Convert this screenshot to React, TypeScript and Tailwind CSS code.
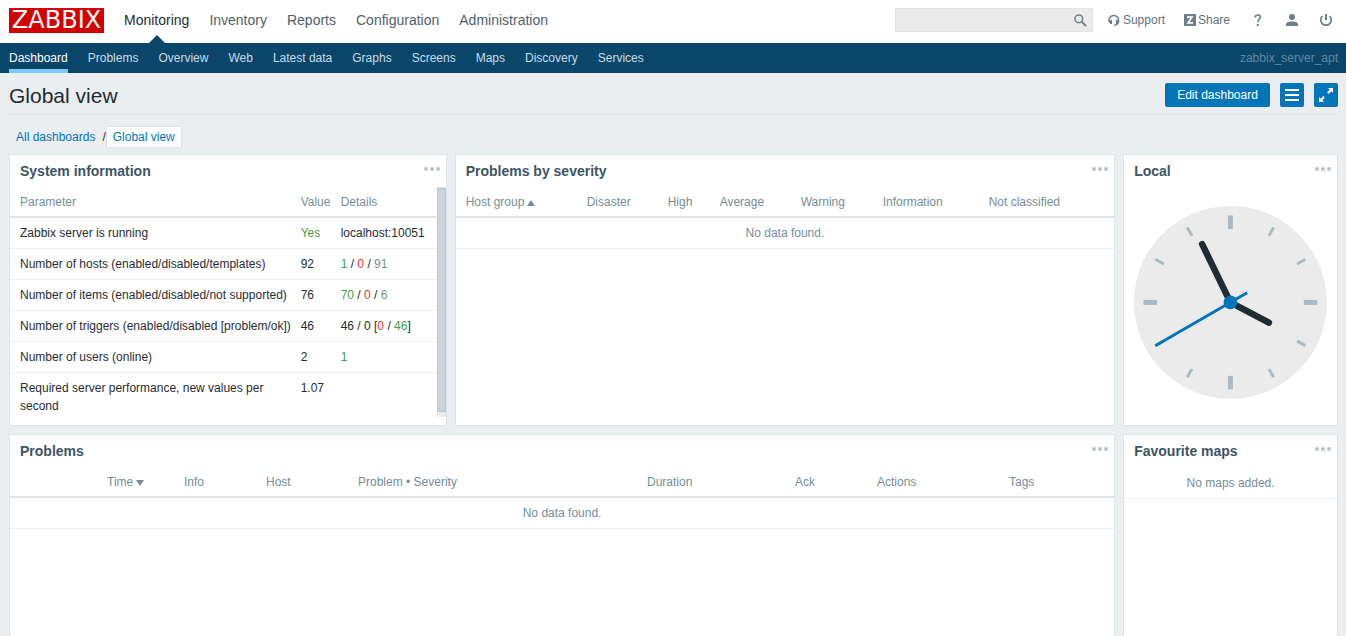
import type { ReactNode } from "react"

const mainMenu = ["Monitoring", "Inventory", "Reports", "Configuration", "Administration"]

const subMenu = [
  "Dashboard",
  "Problems",
  "Overview",
  "Web",
  "Latest data",
  "Graphs",
  "Screens",
  "Maps",
  "Discovery",
  "Services",
]

const green = "text-[#429e47]"
const red = "text-[#e33734]"
const grey = "text-[#768d99]"

interface InfoRow {
  name: string
  value: ReactNode
  details?: ReactNode
}

const infoRows: InfoRow[] = [
  {
    name: "Zabbix server is running",
    value: <span className={green}>Yes</span>,
    details: "localhost:10051",
  },
  {
    name: "Number of hosts (enabled/disabled/templates)",
    value: "92",
    details: (
      <>
        <span className={green}>1</span> / <span className={red}>0</span> / <span className={grey}>91</span>
      </>
    ),
  },
  {
    name: "Number of items (enabled/disabled/not supported)",
    value: "76",
    details: (
      <>
        <span className={green}>70</span> / <span className={red}>0</span> / <span className={grey}>6</span>
      </>
    ),
  },
  {
    name: "Number of triggers (enabled/disabled [problem/ok])",
    value: "46",
    details: (
      <>
        46 / 0 [<span className={red}>0</span> / <span className={green}>46</span>]
      </>
    ),
  },
  {
    name: "Number of users (online)",
    value: "2",
    details: <span className={green}>1</span>,
  },
  {
    name: "Required server performance, new values per second",
    value: "1.07",
  },
]

function Dots() {
  return (
    <button type="button" aria-label="Widget menu" className="pr-[5px] pb-1">
      <svg width="18" height="4" viewBox="0 0 18 4" fill="#b9c5cb">
        <circle cx="3" cy="2" r="2" />
        <circle cx="9" cy="2" r="2" />
        <circle cx="15" cy="2" r="2" />
      </svg>
    </button>
  )
}

interface WidgetProps {
  title: string
  className: string
  children: ReactNode
}

function Widget({ title, className, children }: WidgetProps) {
  return (
    <section className={`flex min-w-0 flex-col border border-[#dfe4e7] bg-white pb-2 ${className}`}>
      <div className="flex h-8 shrink-0 items-center justify-between pl-[10px]">
        <h4 className="text-sm font-bold text-[#3c5563]">{title}</h4>
        <Dots />
      </div>
      <div className="min-h-0 flex-1">{children}</div>
    </section>
  )
}

function Th({ children }: { children?: ReactNode }) {
  return (
    <th className="border-b-2 border-[#dfe4e7] px-[5px] pt-[6px] pb-[5px] text-left font-normal whitespace-nowrap text-[#768d99] first:pl-[10px]">
      {children}
    </th>
  )
}

function Td({ children }: { children?: ReactNode }) {
  return (
    <td className="border-b border-[#ebeef0] px-[5px] py-[6px] align-top first:pr-0 first:pl-[10px]">{children}</td>
  )
}

function EmptyRow({ span, children }: { span: number; children: ReactNode }) {
  return (
    <tr>
      <td colSpan={span} className="border-b border-[#ebeef0] py-[6px] text-center text-[#768d99]">
        {children}
      </td>
    </tr>
  )
}

function SystemInformation() {
  return (
    <div className="flex h-full">
      <div className="min-w-0 flex-1 overflow-hidden">
        <table className="w-full table-fixed border-separate border-spacing-0">
          <colgroup>
            <col />
            <col className="w-[40px]" />
            <col className="w-[100px]" />
          </colgroup>
          <thead>
            <tr>
              <Th>Parameter</Th>
              <Th>Value</Th>
              <Th>Details</Th>
            </tr>
          </thead>
          <tbody>
            {infoRows.map((row) => (
              <tr key={row.name}>
                <Td>{row.name}</Td>
                <Td>{row.value}</Td>
                <Td>{row.details}</Td>
              </tr>
            ))}
          </tbody>
        </table>
      </div>
      {/* Scrollbar */}
      <div className="ml-px flex w-[9px] flex-col bg-[#ebebeb] pt-px pb-[5px]">
        <div className="flex-1 border border-[#b9c5cc] bg-[#cad4da]" />
      </div>
    </div>
  )
}

function SeverityTable() {
  return (
    <table className="w-full table-fixed border-separate border-spacing-0">
      <colgroup>
        <col className="w-[126px]" />
        <col className="w-[81px]" />
        <col className="w-[52px]" />
        <col className="w-[81px]" />
        <col className="w-[82px]" />
        <col className="w-[106px]" />
        <col />
      </colgroup>
      <thead>
        <tr>
          <Th>
            <span className="flex items-center gap-[3px]">
              Host group
              <svg width="8" height="6" viewBox="0 0 8 6" fill="#768d99" className="mt-[2px]">
                <path d="M4 0L8 6H0Z" />
              </svg>
            </span>
          </Th>
          <Th>Disaster</Th>
          <Th>High</Th>
          <Th>Average</Th>
          <Th>Warning</Th>
          <Th>Information</Th>
          <Th>Not classified</Th>
        </tr>
      </thead>
      <tbody>
        <EmptyRow span={7}>No data found.</EmptyRow>
      </tbody>
    </table>
  )
}

function ProblemsTable() {
  return (
    <table className="w-full table-fixed border-separate border-spacing-0">
      <colgroup>
        <col className="w-[92px]" />
        <col className="w-[77px]" />
        <col className="w-[82px]" />
        <col className="w-[92px]" />
        <col className="w-[289px]" />
        <col className="w-[148px]" />
        <col className="w-[82px]" />
        <col className="w-[132px]" />
        <col />
      </colgroup>
      <thead>
        <tr>
          <Th />
          <Th>
            <span className="flex items-center gap-[3px]">
              Time
              <svg width="8" height="6" viewBox="0 0 8 6" fill="#768d99" className="mt-[2px]">
                <path d="M0 0H8L4 6Z" />
              </svg>
            </span>
          </Th>
          <Th>Info</Th>
          <Th>Host</Th>
          <Th>Problem • Severity</Th>
          <Th>Duration</Th>
          <Th>Ack</Th>
          <Th>Actions</Th>
          <Th>Tags</Th>
        </tr>
      </thead>
      <tbody>
        <EmptyRow span={9}>No data found.</EmptyRow>
      </tbody>
    </table>
  )
}

const quarters = [0, 90, 180, 270]
const hours = [30, 60, 120, 150, 210, 240, 300, 330]

function Clock() {
  return (
    <div className="flex h-full items-center px-[10px]">
      <svg
        viewBox="-96.5 -96.5 193 193"
        className="max-h-full w-full overflow-visible"
        role="img"
        aria-label="Local time"
      >
        <circle r="96.5" fill="#ebebeb" />
        <g fill="#acbbc2">
          {quarters.map((deg) => (
            <rect key={deg} x="-2.5" y="-87" width="5" height="13.5" transform={`rotate(${deg})`} />
          ))}
          {hours.map((deg) => (
            <rect key={deg} x="-1.5" y="-86.5" width="3" height="9.5" transform={`rotate(${deg})`} />
          ))}
        </g>
        <g stroke="#1f2c33" strokeLinecap="round">
          <path d="M0 0L38.5 20.2" strokeWidth="6.5" />
          <path d="M0 0L-28.3 -58.3" strokeWidth="6.5" />
        </g>
        <path d="M16.7 -9.6L-75.2 43.4" stroke="#0275b8" strokeWidth="3" />
        <circle r="6.8" fill="#0275b8" />
      </svg>
    </div>
  )
}

function Header() {
  return (
    <header className="flex h-[43px] items-center justify-between bg-white pr-[13px] pb-[3px] pl-[9px]">
      <div className="flex items-center gap-5">
        <a
          href="#"
          className="flex h-[25px] w-[95px] items-center justify-center bg-[#d40000] font-['DejaVu_Sans',sans-serif] text-2xl leading-[25px] text-white"
        >
          ZABBIX
        </a>
        <nav className="flex gap-5 text-sm leading-10 text-[#50606a]">
          {mainMenu.map((item, i) =>
            i === 0 ? (
              <a key={item} href="#" className="relative text-[#1f2c33]">
                {item}
                <svg
                  width="16"
                  height="8"
                  viewBox="0 0 16 8"
                  fill="#0a466a"
                  className="absolute -bottom-[3px] left-1/2 -translate-x-1/2"
                >
                  <path d="M8 0L16 8H0Z" />
                </svg>
              </a>
            ) : (
              <a key={item} href="#">
                {item}
              </a>
            ),
          )}
        </nav>
      </div>

      <div className="flex items-center text-[#5f717b]">
        <form className="flex h-6 w-[198px] items-center border border-[#dfe4e7] bg-[#ebebeb] pr-[5px]">
          <input type="text" aria-label="Search" className="min-w-0 flex-1 bg-transparent px-1 outline-none" />
          <button type="button" aria-label="Search">
            <svg width="13" height="13" viewBox="0 0 13 13" fill="none" stroke="#6a7f8a">
              <circle cx="4.8" cy="4.8" r="3.9" strokeWidth="1.5" />
              <path d="M7.6 7.6L12 12" strokeWidth="2" />
            </svg>
          </button>
        </form>
        <a href="#" className="ml-[15px] flex items-center gap-[3px]">
          <svg width="12" height="12" viewBox="0 0 12 12" fill="none" stroke="#6a7f8a">
            <path d="M1.6 8.6A4.8 4.8 0 1 1 10.4 7.4" strokeWidth="1.5" />
            <path d="M3 6V10M9 6V10" strokeWidth="2" />
            <path d="M10.6 7Q10.4 11 6.2 11.2" strokeWidth="1.4" />
          </svg>
          Support
        </a>
        <a href="#" className="ml-[19px] flex items-center gap-[2px]">
          <svg width="12" height="12" viewBox="0 0 12 12">
            <rect width="12" height="12" fill="#6a7f8a" />
            <path d="M3 3.2H8L4 8.8H9" fill="none" stroke="#fff" strokeWidth="1.7" />
          </svg>
          Share
        </a>
        <a href="#" aria-label="Help" className="ml-6">
          <svg width="8" height="12" viewBox="0 0 8 12" fill="none" stroke="#6a7f8a">
            <path d="M1.2 3.6C1.2 1.8 2.3 1 3.8 1S6.4 1.9 6.4 3.3C6.4 5.2 3.8 5.5 3.8 8.3" strokeWidth="1.7" />
            <path d="M3.8 10V12" strokeWidth="2" />
          </svg>
        </a>
        <a href="#" aria-label="User profile" className="ml-6">
          <svg width="12" height="12" viewBox="0 0 12 12" fill="#6a7f8a">
            <circle cx="6" cy="3" r="3" />
            <path d="M0 12V10.4C0 8.6 2.6 7.6 6 7.6S12 8.6 12 10.4V12Z" />
          </svg>
        </a>
        <a href="#" aria-label="Sign out" className="ml-[21px]">
          <svg width="14" height="14" viewBox="0 0 14 14" fill="none" stroke="#6a7f8a">
            <path d="M3.4 3A5.3 5.3 0 1 0 10.6 3" strokeWidth="1.7" />
            <path d="M7 1V7" strokeWidth="2" />
          </svg>
        </a>
      </div>
    </header>
  )
}

export default function App() {
  return (
    <div className="flex min-h-screen flex-col bg-[#ebeef0] font-['Liberation_Sans',Arial,sans-serif] text-xs leading-[18px] text-[#1f2c33]">
      <Header />

      <nav className="flex h-[30px] justify-between bg-[#0a466a] pr-2 pl-[9px] leading-[30px]">
        <div className="flex gap-5 text-[#c9dce8]">
          {subMenu.map((item, i) => (
            <a
              key={item}
              href="#"
              className={i === 0 ? "h-[30px] border-b-4 border-[#7ec8f8] text-white" : "h-[30px]"}
            >
              {item}
            </a>
          ))}
        </div>
        <span className="text-[#60869c]">zabbix_server_apt</span>
      </nav>

      <main className="flex flex-1 flex-col pr-2 pl-[9px]">
        <div className="flex h-[42px] items-center justify-between border-b border-[#dfe4e7] pt-[3px]">
          <h1 className="pt-[2px] text-[21px] leading-6">Global view</h1>
          <div className="flex gap-[10px]">
            <button type="button" className="h-6 w-[105px] rounded-xs bg-[#0275b8] text-white">
              Edit dashboard
            </button>
            <button
              type="button"
              aria-label="Actions"
              className="flex size-6 items-center justify-center rounded-xs bg-[#0275b8]"
            >
              <svg width="14" height="12" viewBox="0 0 14 12" fill="#fff">
                <path d="M0 0H14V2H0ZM0 5H14V7H0ZM0 10H14V12H0Z" />
              </svg>
            </button>
            <button
              type="button"
              aria-label="Fullscreen"
              className="flex size-6 items-center justify-center rounded-xs bg-[#0275b8]"
            >
              <svg width="14" height="14" viewBox="0 0 14 14" fill="#fff">
                <path d="M9 0H14V5L12.3 3.3L9.7 5.9L8.1 4.3L10.7 1.7Z" />
                <path d="M5 14H0V9L1.7 10.7L4.3 8.1L5.9 9.7L3.3 12.3Z" />
              </svg>
            </button>
          </div>
        </div>

        {/* Breadcrumbs */}
        <div className="flex h-[39px] items-center pt-[5px] pl-[7px] text-[#0275b8]">
          <a href="#">All dashboards</a>
          <span className="pl-[7px] text-[#1f2c33]">/</span>
          <a href="#" className="border border-[#dfe4e7] bg-white px-[6px] py-px">
            Global view
          </a>
        </div>

        <div className="grid flex-1 grid-cols-12 grid-rows-[272px_1fr] gap-2">
          <Widget title="System information" className="col-span-4">
            <SystemInformation />
          </Widget>
          <Widget title="Problems by severity" className="col-span-6">
            <SeverityTable />
          </Widget>
          <Widget title="Local" className="col-span-2">
            <Clock />
          </Widget>
          <Widget title="Problems" className="col-span-10 border-b-0">
            <ProblemsTable />
          </Widget>
          <Widget title="Favourite maps" className="col-span-2 border-b-0">
            <p className="border-t border-b border-t-transparent border-b-[#ebeef0] py-[6px] text-center text-[#768d99]">
              No maps added.
            </p>
          </Widget>
        </div>
      </main>
    </div>
  )
}
